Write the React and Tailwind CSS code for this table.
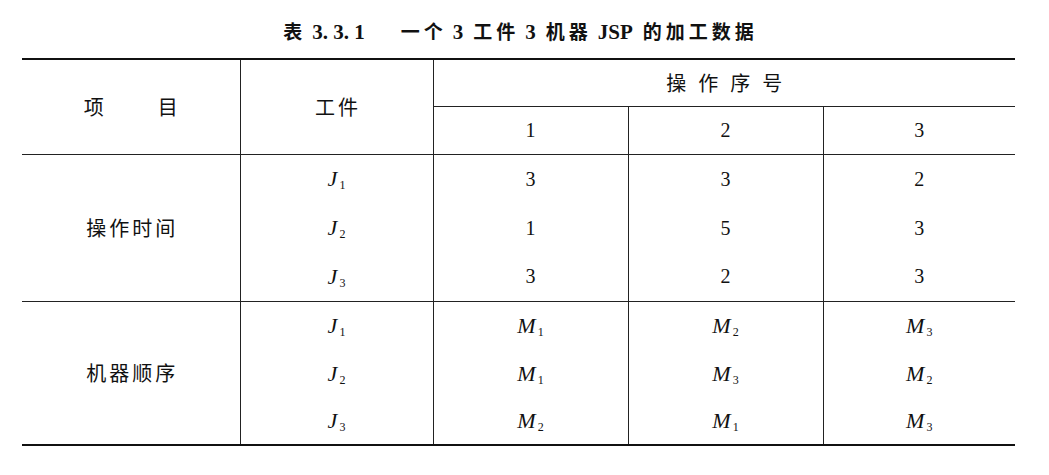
const serif = { fontFamily: '"Liberation Serif", "Noto Sans CJK SC", serif' };

const Sub = ({ base, n }) => (
  <span className="text-[22px]">
    <i>{base}</i>
    <span className="text-[12px] not-italic relative top-[3px] ml-[2px]">{n}</span>
  </span>
);

const groups = [
  {
    label: "操作时间",
    h: "h-[49px]",
    rows: [
      ["1", ["3", "3", "2"]],
      ["2", ["1", "5", "3"]],
      ["3", ["3", "2", "3"]],
    ],
  },
  {
    label: "机器顺序",
    h: "h-[48px]",
    rows: [
      ["1", [["M", "1"], ["M", "2"], ["M", "3"]]],
      ["2", [["M", "1"], ["M", "3"], ["M", "2"]]],
      ["3", [["M", "2"], ["M", "1"], ["M", "3"]]],
    ],
  },
];

const cjk = "font-['Noto_Sans_CJK_SC',sans-serif]";
const tcjk = `${cjk} text-[19px] tracking-[4px] mr-[-4px]`;

export default function App() {
  return (
    <div className="w-[1049px] h-[475px] bg-white text-[#111]" style={serif}>
      {/* Title */}
      <div className="pt-[19px] h-[58px] w-[993px] ml-[22px] flex justify-center items-baseline gap-[10px] text-[21px] font-bold leading-[24px]">
        <span className={tcjk}>表</span>
        <span className="whitespace-pre">3. 3. 1</span>
        <span className={`${tcjk} ml-[26px]`}>一个</span>
        <span>3</span>
        <span className={tcjk}>工件</span>
        <span>3</span>
        <span className={tcjk}>机器</span>
        <span>JSP</span>
        <span className={tcjk}>的加工数据</span>
      </div>

      <table className="ml-[22px] w-[993px] border-collapse table-fixed border-t-2 border-b-2 border-[#111]">
        <colgroup>
          <col className="w-[218px]" />
          <col className="w-[193px]" />
          <col className="w-[195px]" />
          <col className="w-[195px]" />
          <col className="w-[192px]" />
        </colgroup>
        <thead>
          <tr className="h-[47px]">
            <th rowSpan={2} className={`font-normal text-[20px] ${cjk} border-r border-b border-[#222]`}>
              项<span className="ml-[54px]">目</span>
            </th>
            <th rowSpan={2} className={`font-normal text-[20px] tracking-[3px] pl-[3px] ${cjk} border-r border-b border-[#222]`}>
              工件
            </th>
            <th colSpan={3} className={`font-normal text-[20px] ${cjk} tracking-[12px] pl-[12px] border-b border-[#222]`}>
              操作序号
            </th>
          </tr>
          <tr className="h-[48px]">
            {["1", "2", "3"].map((n, i) => (
              <th key={n} className={`font-normal text-[20px] border-b border-[#222] ${i < 2 ? "border-r" : ""}`}>
                {n}
              </th>
            ))}
          </tr>
        </thead>
        <tbody>
          {groups.map((g, gi) =>
            g.rows.map(([j, vals], ri) => (
              <tr
                key={`${gi}-${ri}`}
                className={`${g.h} ${ri === 2 && gi === 0 ? "border-b border-[#222]" : ""}`}
              >
                {ri === 0 && (
                  <td rowSpan={3} className={`text-center text-[20px] tracking-[3px] pl-[3px] ${cjk} border-r border-[#222]`}>
                    {g.label}
                  </td>
                )}
                <td className="text-center border-r border-[#222]">
                  <Sub base="J" n={j} />
                </td>
                {vals.map((v, vi) => (
                  <td
                    key={vi}
                    className={`text-center text-[20px] ${vi < 2 ? "border-r border-[#222]" : ""}`}
                  >
                    {Array.isArray(v) ? <Sub base={v[0]} n={v[1]} /> : v}
                  </td>
                ))}
              </tr>
            ))
          )}
        </tbody>
      </table>
    </div>
  );
}
